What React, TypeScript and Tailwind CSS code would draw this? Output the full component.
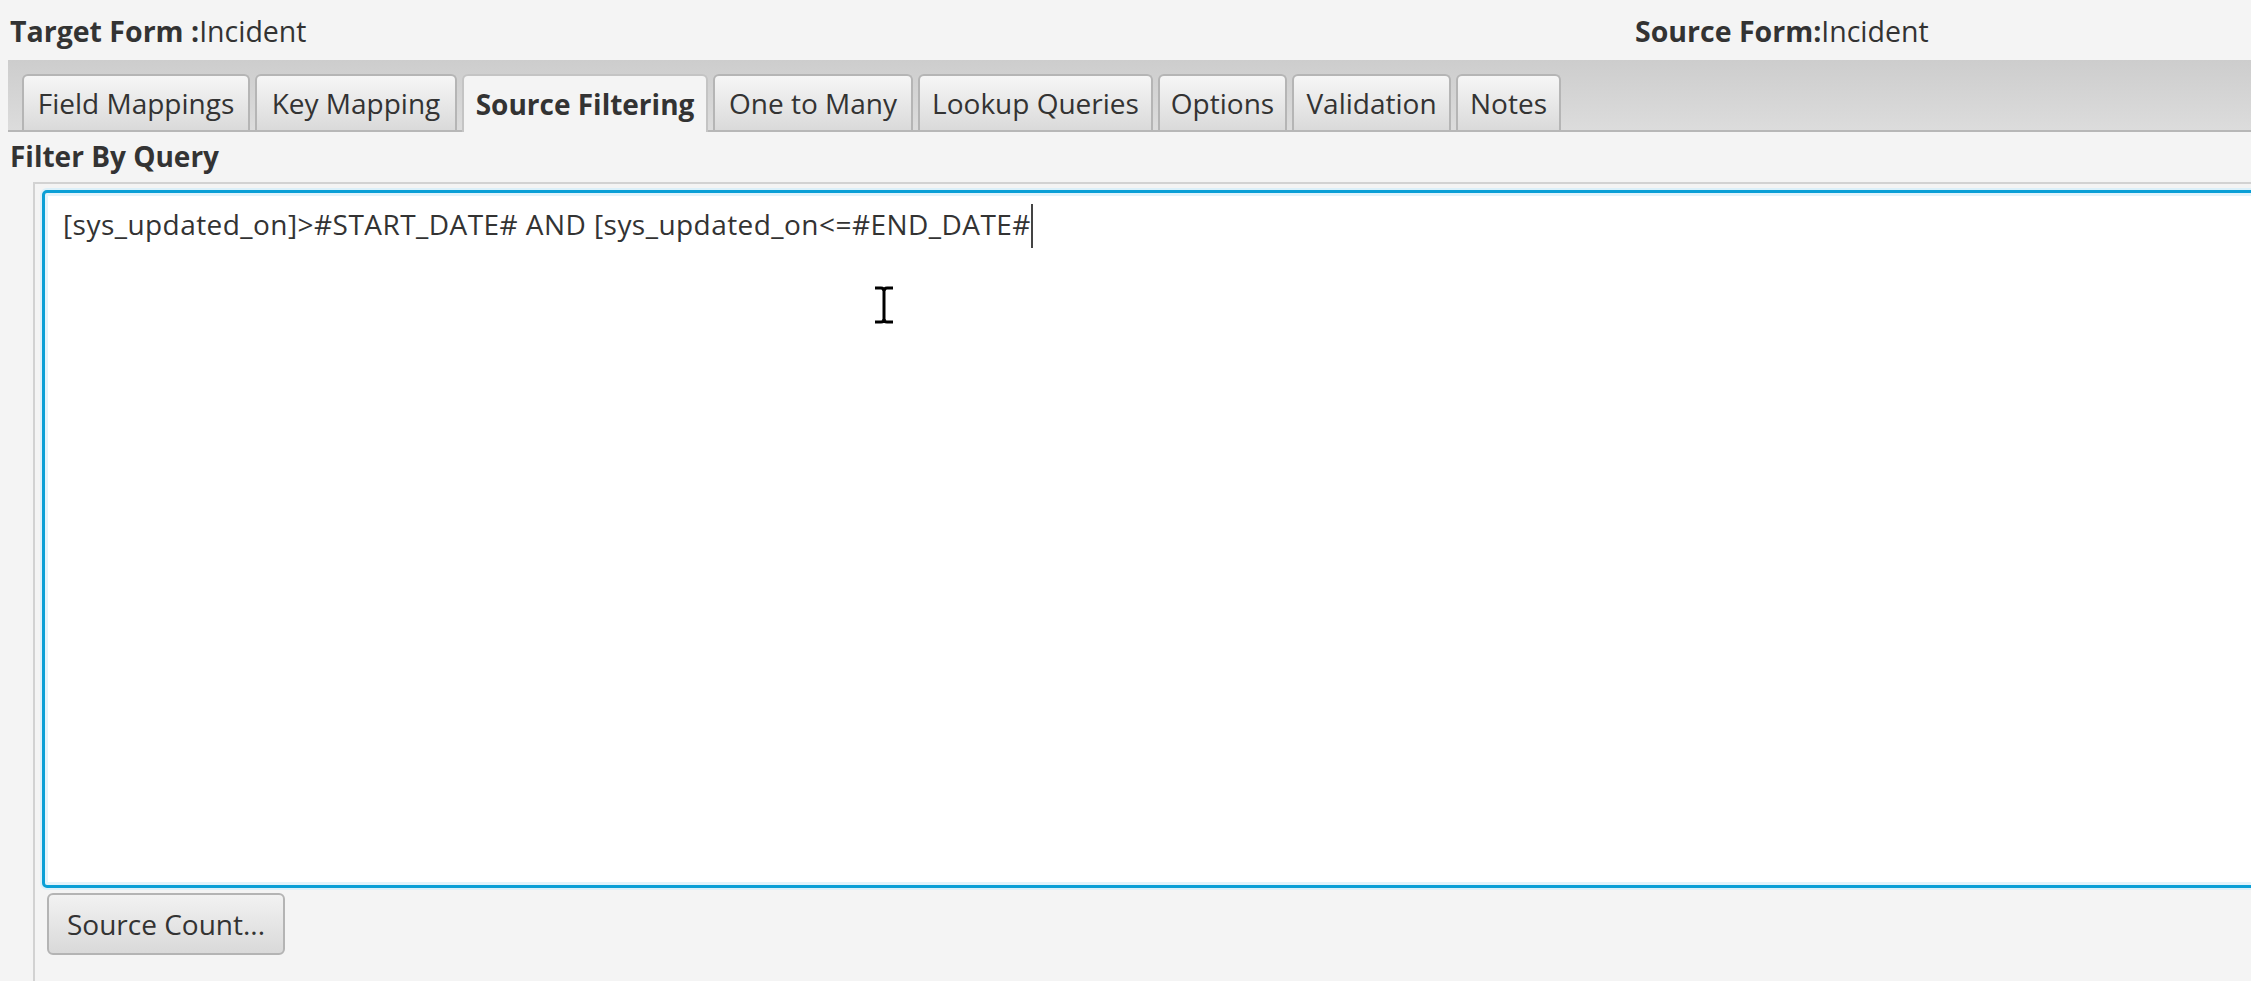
import React from 'react';

const tabs = [
  { label: 'Field Mappings', w: 'w-[228px]' },
  { label: 'Key Mapping', w: 'w-[202px]' },
  { label: 'Source Filtering', w: 'w-[246px]', active: true },
  { label: 'One to Many', w: 'w-[200px]' },
  { label: 'Lookup Queries', w: 'w-[235px]' },
  { label: 'Options', w: 'w-[129px]' },
  { label: 'Validation', w: 'w-[159px]' },
  { label: 'Notes', w: 'w-[105px]' },
];

const query = '[sys_updated_on]>#START_DATE# AND [sys_updated_on<=#END_DATE#';

export default function App() {
  return (
    <div className="relative w-full h-[981px] overflow-hidden bg-[#f4f4f4] text-[#333333] font-['Open_Sans',sans-serif] flex flex-col">
      {/* header */}
      <div className="flex h-[60px] pt-[13px] text-[28.5px] leading-[36px] shrink-0">
        <div className="w-[1635px] pl-[10px]">
          <span className="font-bold">Target Form :</span>Incident
        </div>
        <div>
          <span className="font-bold">Source Form:</span>Incident
        </div>
      </div>

      {/* tabs */}
      <div className="ml-[8px] h-[72px] shrink-0 bg-gradient-to-b from-[#cdcdcd] to-[#dcdcdc] border-b-2 border-[#b7b7b7] flex items-end gap-[5px] pl-[14px]">
        {tabs.map((t) =>
          t.active ? (
            <div
              key={t.label}
              className={`${t.w} h-[58px] -mb-[2px] rounded-t-[6px] border-2 border-b-0 border-[#c4c4c4] bg-[#f4f4f4] flex items-center justify-center text-[28px] leading-[36px] font-bold`}
            >
              {t.label}
            </div>
          ) : (
            <div
              key={t.label}
              className={`${t.w} h-[56px] rounded-t-[6px] border-2 border-b-0 border-[#b5b5b5] bg-gradient-to-b from-[#f6f6f6] to-[#dadada] flex items-center justify-center text-[28px] leading-[36px]`}
            >
              {t.label}
            </div>
          ),
        )}
      </div>

      {/* content */}
      <div className="h-[50px] shrink-0 pl-[10px] pt-[6px] text-[28px] leading-[36px] font-bold">Filter By Query</div>

      <div className="flex-1 ml-[33px] border-t-2 border-l-2 border-[#d2d2d2] pl-[7px] pt-[6px]">
        <div className="w-[2260px] h-[698px] rounded-[5px] border-[3px] border-[#0a9fd6] bg-white shadow-[0_0_0_2px_#dcf0f9,inset_0_0_0_3px_#e2f3fb] pl-[18px] pt-[11px] text-[28px] tracking-[0.45px] leading-[36px] whitespace-pre">
          {query}
          <span className="inline-block w-[2px] h-[44px] bg-[#444444] align-[-13px]" />
        </div>
        <button className="mt-[5px] ml-[5px] w-[238px] h-[62px] rounded-[6px] border-2 border-[#b4b4b4] bg-gradient-to-b from-[#f2f2f2] to-[#d9d9d9] text-[28px] leading-[36px] text-[#333333]">
          Source Count...
        </button>
      </div>

      {/* mouse I-beam cursor */}
      <svg className="absolute left-[873px] top-[286px]" width="22" height="38" viewBox="0 0 22 38">
        <path d="M2 2 H8 Q11 2 11 5 Q11 2 14 2 H20" fill="none" stroke="#000" strokeWidth="3" />
        <path d="M11 4 V34" stroke="#000" strokeWidth="3" />
        <path d="M2 36 H8 Q11 36 11 33 Q11 36 14 36 H20" fill="none" stroke="#000" strokeWidth="3" />
      </svg>
    </div>
  );
}
